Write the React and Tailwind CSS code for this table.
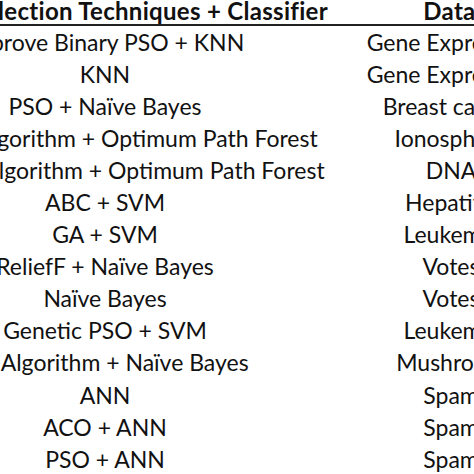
import React from 'react';

const rows = [
  ['Improve Binary PSO + KNN', 'Gene Expression'],
  ['KNN', 'Gene Expression'],
  ['PSO + Naïve Bayes', 'Breast cancer'],
  ['Genetic Algorithm + Optimum Path Forest', 'Ionosphere'],
  ['Harmony Algorithm + Optimum Path Forest', 'DNA'],
  ['ABC + SVM', 'Hepatitis'],
  ['GA + SVM', 'Leukemia'],
  ['ReliefF + Naïve Bayes', 'Votes'],
  ['Naïve Bayes', 'Votes'],
  ['Genetic PSO + SVM', 'Leukemia'],
  ['Bat Algorithm + Naïve Bayes', 'Mushroom'],
  ['ANN', 'Spam'],
  ['ACO + ANN', 'Spam'],
  ['PSO + ANN', 'Spam'],
];

export default function App() {
  return (
    <div className="w-[474px] h-[474px] overflow-hidden bg-white text-[#111]" style={{ fontFamily: 'Lato, "Open Sans", sans-serif' }}>
      <div className="ml-[-155px] w-[692px]">
        {/* header */}
        <div className="grid grid-cols-[520px_172px] h-[26px] border-b-2 border-[#222] font-bold text-[24px] leading-[22px] tracking-[0.3px]">
          <div className="text-center whitespace-nowrap">Feature Selection Techniques + Classifier</div>
          <div className="text-center whitespace-nowrap pl-[30px]">Dataset</div>
        </div>
        {rows.map(([tech, data], i) => (
          <div key={i} className="grid grid-cols-[520px_172px] h-[32.1px] items-center text-[23px] leading-none">
            <div className="text-center whitespace-nowrap">{tech}</div>
            <div className="text-center whitespace-nowrap">{data}</div>
          </div>
        ))}
      </div>
    </div>
  );
}
